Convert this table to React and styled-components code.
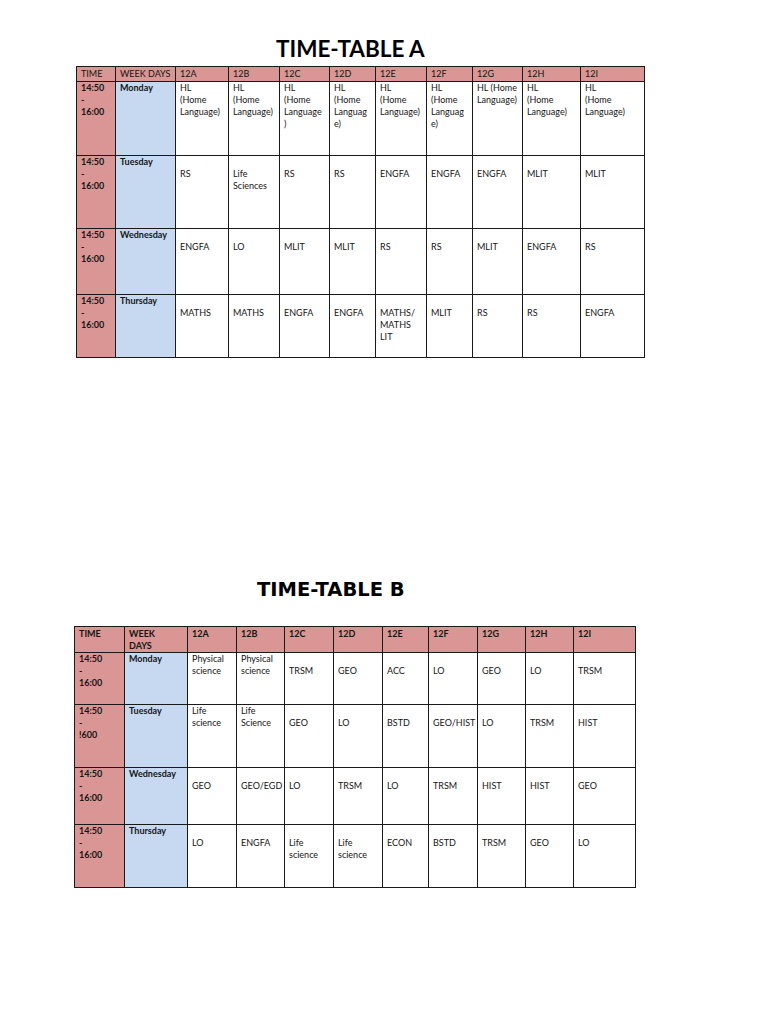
import React from "react";
import styled, { createGlobalStyle } from "styled-components";

const GlobalStyle = createGlobalStyle`
  html, body {
    margin: 0;
    padding: 0;
    background: #ffffff;
  }
  body {
    font-family: Lato, "Liberation Sans", sans-serif;
    color: #111111;
  }
`;

const Page = styled.main`
  width: 768px;
  min-height: 1024px;
  display: flex;
  flex-direction: column;
  padding-top: 34px;
  box-sizing: border-box;
`;

const Section = styled.section`
  display: flex;
  flex-direction: column;
  padding-left: ${p => p.$left}px;
  margin-bottom: ${p => p.$after || 0}px;
`;

const TitleA = styled.h1`
  margin: 0 0 0 ${p => p.$indent}px;
  font-family: Lato, "Liberation Sans", sans-serif;
  font-weight: 700;
  font-size: 22.5px;
  line-height: 30px;
  height: 32px;
  color: #000;
`;

const TitleB = styled.h1`
  margin: 0 0 0 ${p => p.$indent}px;
  font-family: "DejaVu Sans", "Liberation Sans", sans-serif;
  font-weight: 700;
  font-size: 19.5px;
  line-height: 24px;
  height: 48px;
  color: #000;
`;

const Grid = styled.table`
  border-collapse: collapse;
  table-layout: fixed;
  width: ${p => p.$width}px;
`;

const Col = styled.col`
  width: ${p => p.$w}px;
`;

const Row = styled.tr`
  height: ${p => p.$h}px;
`;

const Cell = styled.td`
  border: 1px solid #1a1a1a;
  padding: ${p => (p.$head ? "1px" : "0")} 3px 0 4px;
  vertical-align: top;
  text-align: left;
  font-size: 9px;
  line-height: 12px;
  font-weight: ${p => (p.$bold ? 700 : 400)};
  background: ${p =>
    p.$tone === "pink" ? "#d99694" : p.$tone === "blue" ? "#c6d9f1" : "#ffffff"};
  color: #151515;
  white-space: nowrap;
  overflow: hidden;
`;

const Line = styled.span`
  display: block;
  min-height: 12px;
`;

const Lines = ({ lines }) =>
  lines.map((l, i) => <Line key={i}>{l || "\u00a0"}</Line>);

const TIME = ["14:50", "-", "16:00"];

const tableA = {
  title: "TIME-TABLE A",
  width: 568,
  cols: [39, 60, 53, 51, 50, 46, 51, 46, 50, 58, 64],
  boldHead: false,
  headH: 15,
  head: [["TIME"], ["WEEK DAYS"], ["12A"], ["12B"], ["12C"], ["12D"], ["12E"], ["12F"], ["12G"], ["12H"], ["12I"]],
  rows: [
    {
      h: 74,
      time: TIME,
      day: "Monday",
      cells: [
        ["HL", "(Home", "Language)"],
        ["HL", "(Home", "Language)"],
        ["HL", "(Home", "Language", ")"],
        ["HL", "(Home", "Languag", "e)"],
        ["HL", "(Home", "Language)"],
        ["HL", "(Home", "Languag", "e)"],
        ["HL (Home", "Language)"],
        ["HL", "(Home", "Language)"],
        ["HL", "(Home", "Language)"]
      ]
    },
    {
      h: 73,
      time: TIME,
      day: "Tuesday",
      cells: [
        ["", "RS"],
        ["", "Life", "Sciences"],
        ["", "RS"],
        ["", "RS"],
        ["", "ENGFA"],
        ["", "ENGFA"],
        ["", "ENGFA"],
        ["", "MLIT"],
        ["", "MLIT"]
      ]
    },
    {
      h: 66,
      time: TIME,
      day: "Wednesday",
      cells: [
        ["", "ENGFA"],
        ["", "LO"],
        ["", "MLIT"],
        ["", "MLIT"],
        ["", "RS"],
        ["", "RS"],
        ["", "MLIT"],
        ["", "ENGFA"],
        ["", "RS"]
      ]
    },
    {
      h: 63,
      time: TIME,
      day: "Thursday",
      cells: [
        ["", "MATHS"],
        ["", "MATHS"],
        ["", "ENGFA"],
        ["", "ENGFA"],
        ["", "MATHS/", "MATHS", "LIT"],
        ["", "MLIT"],
        ["", "RS"],
        ["", "RS"],
        ["", "ENGFA"]
      ]
    }
  ]
};

const tableB = {
  title: "TIME-TABLE B",
  width: 561,
  cols: [50, 63, 49, 48, 49, 49, 46, 49, 48, 48, 62],
  boldHead: true,
  headH: 26,
  head: [["TIME"], ["WEEK", "DAYS"], ["12A"], ["12B"], ["12C"], ["12D"], ["12E"], ["12F"], ["12G"], ["12H"], ["12I"]],
  rows: [
    {
      h: 52,
      time: TIME,
      day: "Monday",
      cells: [
        ["Physical", "science"],
        ["Physical", "science"],
        ["", "TRSM"],
        ["", "GEO"],
        ["", "ACC"],
        ["", "LO"],
        ["", "GEO"],
        ["", "LO"],
        ["", "TRSM"]
      ]
    },
    {
      h: 63,
      time: ["14:50", "-", "!600"],
      day: "Tuesday",
      cells: [
        ["Life", "science"],
        ["Life", "Science"],
        ["", "GEO"],
        ["", "LO"],
        ["", "BSTD"],
        ["", "GEO/HIST"],
        ["", "LO"],
        ["", "TRSM"],
        ["", "HIST"]
      ]
    },
    {
      h: 57,
      time: TIME,
      day: "Wednesday",
      cells: [
        ["", "GEO"],
        ["", "GEO/EGD"],
        ["", "LO"],
        ["", "TRSM"],
        ["", "LO"],
        ["", "TRSM"],
        ["", "HIST"],
        ["", "HIST"],
        ["", "GEO"]
      ]
    },
    {
      h: 63,
      time: TIME,
      day: "Thursday",
      cells: [
        ["", "LO"],
        ["", "ENGFA"],
        ["", "Life", "science"],
        ["", "Life", "science"],
        ["", "ECON"],
        ["", "BSTD"],
        ["", "TRSM"],
        ["", "GEO"],
        ["", "LO"]
      ]
    }
  ]
};

const Timetable = ({ data }) => (
  <Grid $width={data.width}>
    <colgroup>
      {data.cols.map((w, i) => (
        <Col key={i} $w={w} />
      ))}
    </colgroup>
    <thead>
      <Row $h={data.headH}>
        {data.head.map((h, i) => (
          <Cell key={i} as="th" $head $tone="pink" $bold={data.boldHead}>
            <Lines lines={h} />
          </Cell>
        ))}
      </Row>
    </thead>
    <tbody>
      {data.rows.map(r => (
        <Row key={r.day} $h={r.h}>
          <Cell $tone="pink" $bold>
            <Lines lines={r.time} />
          </Cell>
          <Cell $tone="blue" $bold>
            <Lines lines={[r.day]} />
          </Cell>
          {r.cells.map((c, i) => (
            <Cell key={i}>
              <Lines lines={c} />
            </Cell>
          ))}
        </Row>
      ))}
    </tbody>
  </Grid>
);

export default function App() {
  return (
    <>
      <GlobalStyle />
      <Page>
        <Section $left={76} $after={220}>
          <TitleA $indent={200}>{tableA.title}</TitleA>
          <Timetable data={tableA} />
        </Section>
        <Section $left={74}>
          <TitleB $indent={183}>{tableB.title}</TitleB>
          <Timetable data={tableB} />
        </Section>
      </Page>
    </>
  );
}
